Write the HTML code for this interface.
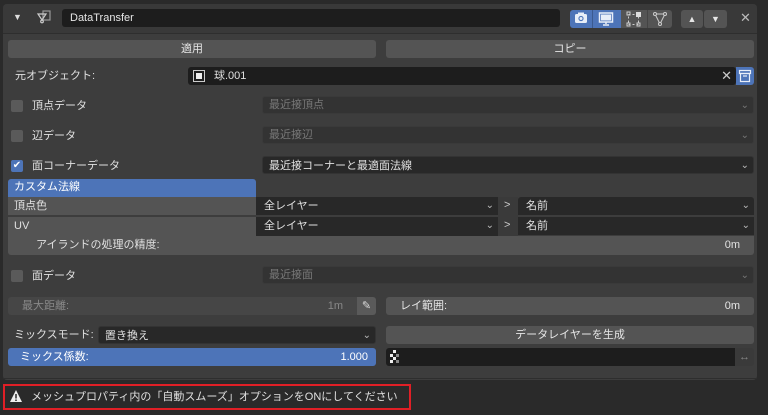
<!DOCTYPE html>
<html><head><meta charset="utf-8"><style>
*{box-sizing:border-box;margin:0;padding:0}
body{width:768px;height:415px;background:#2a2a2a;font-family:"Liberation Sans","Noto Sans CJK JP",sans-serif;font-size:11px;color:#e0e0e0;position:relative;overflow:hidden}
.a{position:absolute}
.panel{left:3px;top:4px;width:754px;height:376px;background:#3d3d3d;border-radius:4px}
.hdr{left:3px;top:4px;width:754px;height:30px;background:#393939;border-radius:4px 4px 0 0;border-bottom:1px solid #2e2e2e}
.btn{background:#545454;border-radius:3px;color:#e6e6e6;text-align:center;line-height:18px;height:18px}
.dark{background:#1d1d1d;border-radius:3px;height:18px;line-height:18px}
.dd{background:#282828;border-radius:3px;height:18px;line-height:18px;padding-left:6px;border:1px solid #333}
.dis{background:#333;border:1px solid #3a3a3a;color:#777;border-radius:3px;height:18px;line-height:17px;padding-left:6px}
.chev{position:absolute;right:4px;top:0;color:#bbb;font-size:10px}
.cb{width:12px;height:12px;border-radius:2px;background:#5a5a5a}
.lbl{line-height:16px}
</style></head><body>
<div class="a panel"></div>
<div class="a hdr"></div>
<div class="a" style="left:13px;top:12px;font-size:9px;color:#ddd">▼</div>
<svg class="a" style="left:36px;top:9px" width="16" height="16" viewBox="0 0 16 16" fill="none" stroke="#ccc" stroke-width="1.2"><rect x="7" y="2" width="7" height="9" stroke="#999"/><path d="M2 5h8l-4 6z"/><circle cx="6" cy="12.5" r="1.3"/></svg>
<div class="a dark" style="left:62px;top:9px;width:498px;padding-left:8px;color:#e6e6e6">DataTransfer</div>
<div class="a" style="left:570px;top:10px;width:51px;height:18px;background:#4d74b8;border-radius:3px 0 0 3px"></div>
<svg class="a" style="left:574px;top:11px" width="14" height="14" viewBox="0 0 14 14"><rect x="1" y="3" width="12" height="9" rx="1.5" fill="#e8eef8"/><circle cx="7" cy="7.5" r="2.6" fill="#4d74b8"/><circle cx="7" cy="7.5" r="1.5" fill="#e8eef8"/><rect x="4" y="1.5" width="6" height="2" fill="#e8eef8"/></svg>
<div class="a" style="left:592px;top:10px;width:1px;height:18px;background:#3b5a90"></div>
<svg class="a" style="left:598px;top:11px" width="16" height="16" viewBox="0 0 16 16"><rect x="1.5" y="2" width="13" height="9" fill="none" stroke="#e8eef8" stroke-width="1.5"/><rect x="3" y="3.5" width="10" height="6" fill="#e8eef8"/><path d="M8 11v2M5 14h6" stroke="#e8eef8" stroke-width="1.5"/></svg>
<div class="a" style="left:621px;top:10px;width:51px;height:18px;background:#545454;border-radius:0 3px 3px 0"></div>
<div class="a" style="left:647px;top:10px;width:1px;height:18px;background:#444"></div>
<svg class="a" style="left:626px;top:11px" width="16" height="16" viewBox="0 0 16 16" fill="none" stroke="#ccc"><rect x="2.5" y="3.5" width="10" height="10" stroke-dasharray="2 2"/><rect x="10" y="1" width="5" height="5" fill="#ddd" stroke="none"/><rect x="1" y="1" width="3" height="3"/><rect x="1" y="12" width="3" height="3"/><rect x="11" y="12" width="3" height="3"/></svg>
<svg class="a" style="left:652px;top:11px" width="16" height="16" viewBox="0 0 16 16" fill="none" stroke="#ccc"><path d="M3 3h10L8 13z"/><circle cx="3" cy="3" r="1.5" fill="#545454"/><circle cx="13" cy="3" r="1.5" fill="#545454"/><circle cx="8" cy="13" r="1.5" fill="#545454"/></svg>
<div class="a btn" style="left:681px;top:10px;width:22px;font-size:9px">▲</div>
<div class="a btn" style="left:704px;top:10px;width:23px;font-size:9px">▼</div>
<div class="a" style="left:740px;top:10px;font-size:13px;color:#bbb">✕</div>

<div class="a btn" style="left:8px;top:40px;width:368px">適用</div>
<div class="a btn" style="left:386px;top:40px;width:368px">コピー</div>

<div class="a lbl" style="left:15px;top:68px">元オブジェクト:</div>
<div class="a dark" style="left:188px;top:67px;width:548px;padding-left:26px">球.001<span style="position:absolute;right:4px;font-size:13px;color:#ccc">✕</span></div>
<div class="a" style="left:193px;top:70px;width:12px;height:12px;border:1px solid #ccc;background:#1d1d1d"><div style="margin:2px;width:6px;height:6px;background:#eee"></div></div>
<div class="a" style="left:736px;top:67px;width:18px;height:18px;background:#4d74b8;border-radius:0 3px 3px 0"></div>
<svg class="a" style="left:738px;top:69px" width="14" height="14" viewBox="0 0 14 14" fill="none" stroke="#e8eef8" stroke-width="1.2"><rect x="1.5" y="1.5" width="11" height="3"/><rect x="2.5" y="4.5" width="9" height="8"/><path d="M5 7h4"/></svg>

<div class="a cb" style="left:11px;top:100px"></div>
<div class="a lbl" style="left:32px;top:98px">頂点データ</div>
<div class="a dis" style="left:262px;top:96px;width:492px">最近接頂点<span class="chev" style="color:#777">⌄</span></div>
<div class="a cb" style="left:11px;top:130px"></div>
<div class="a lbl" style="left:32px;top:128px">辺データ</div>
<div class="a dis" style="left:262px;top:126px;width:492px">最近接辺<span class="chev" style="color:#777">⌄</span></div>
<div class="a cb" style="left:11px;top:160px;background:#4d74b8;color:#fff;font-size:10px;line-height:12px;text-align:center">✔</div>
<div class="a lbl" style="left:32px;top:158px">面コーナーデータ</div>
<div class="a dd" style="left:262px;top:156px;width:492px">最近接コーナーと最適面法線<span class="chev">⌄</span></div>

<div class="a" style="left:8px;top:179px;width:248px;height:18px;background:#4d74b8;border-radius:3px 3px 0 0;padding-left:6px;line-height:17px;color:#fff">カスタム法線</div>
<div class="a" style="left:8px;top:197px;width:248px;height:19px;background:#545454;padding-left:6px;line-height:18px;border-bottom:1px solid #3d3d3d">頂点色</div>
<div class="a" style="left:8px;top:217px;width:248px;height:19px;background:#545454;padding-left:6px;line-height:18px">UV</div>
<div class="a" style="left:256px;top:197px;width:242px;height:19px;background:#282828;padding-left:8px;line-height:18px;border-bottom:1px solid #3d3d3d">全レイヤー<span class="chev">⌄</span></div>
<div class="a" style="left:256px;top:217px;width:242px;height:19px;background:#282828;padding-left:8px;line-height:18px">全レイヤー<span class="chev">⌄</span></div>
<div class="a" style="left:498px;top:197px;width:20px;height:39px;background:#3a3a3a"></div>
<div class="a" style="left:504px;top:199px;color:#ccc">&gt;</div>
<div class="a" style="left:504px;top:219px;color:#ccc">&gt;</div>
<div class="a dd" style="left:518px;top:197px;width:236px;border:none;border-radius:3px 3px 0 0;padding-left:8px">名前<span class="chev">⌄</span></div>
<div class="a dd" style="left:518px;top:217px;width:236px;border:none;border-radius:0;padding-left:8px">名前<span class="chev">⌄</span></div>
<div class="a" style="left:8px;top:236px;width:746px;height:19px;background:#545454;border-radius:0 0 3px 3px;padding-left:28px;line-height:18px">アイランドの処理の精度:<span style="position:absolute;right:14px">0m</span></div>

<div class="a cb" style="left:11px;top:270px"></div>
<div class="a lbl" style="left:32px;top:268px">面データ</div>
<div class="a dis" style="left:262px;top:266px;width:492px">最近接面<span class="chev" style="color:#777">⌄</span></div>

<div class="a" style="left:8px;top:297px;width:349px;height:18px;background:#464646;border-radius:3px 0 0 3px;color:#888;line-height:18px;padding-left:14px">最大距離:<span style="position:absolute;right:14px">1m</span></div>
<div class="a" style="left:357px;top:297px;width:19px;height:18px;background:#5a5a5a;border-radius:0 3px 3px 0;color:#ddd;text-align:center;line-height:18px">✎</div>
<div class="a btn" style="left:386px;top:297px;width:368px;text-align:left;padding-left:14px">レイ範囲:<span style="position:absolute;right:14px">0m</span></div>

<div class="a lbl" style="left:14px;top:327px">ミックスモード:</div>
<div class="a dd" style="left:98px;top:326px;width:278px">置き換え<span class="chev">⌄</span></div>
<div class="a btn" style="left:386px;top:326px;width:368px">データレイヤーを生成</div>
<div class="a" style="left:8px;top:348px;width:368px;height:18px;background:#4d74b8;border-radius:3px;line-height:18px;padding-left:12px;color:#fff">ミックス係数:<span style="position:absolute;right:8px">1.000</span></div>
<div class="a dark" style="left:386px;top:348px;width:349px;border-radius:3px 0 0 3px"></div>
<svg class="a" style="left:390px;top:350px" width="12" height="14" viewBox="0 0 12 14"><g fill="#eee"><rect x="3" y="0" width="3" height="3"/><rect x="0" y="4" width="3" height="3"/><rect x="6" y="4" width="3" height="3" fill="#888"/><rect x="3" y="7" width="3" height="3"/><rect x="0" y="10" width="3" height="3"/><rect x="6" y="10" width="3" height="3" fill="#888"/></g></svg>
<div class="a" style="left:735px;top:348px;width:19px;height:18px;background:#3a3a3a;border-radius:0 3px 3px 0;color:#888;text-align:center;line-height:18px">↔</div>

<div class="a" style="left:3px;top:378px;width:754px;height:1px;background:#2e2e2e"></div>
<div class="a" style="left:3px;top:384px;width:408px;height:26px;border:2px solid #e01f26"></div>
<svg class="a" style="left:9px;top:389px" width="14" height="14" viewBox="0 0 14 14"><path d="M7 1L13 13H1z" fill="#eee"/><rect x="6.2" y="5" width="1.6" height="4.5" fill="#333"/><rect x="6.2" y="10.5" width="1.6" height="1.5" fill="#333"/></svg>
<div class="a" style="left:31px;top:389px;line-height:16px">メッシュプロパティ内の「自動スムーズ」オプションをONにしてください</div>
</body></html>
